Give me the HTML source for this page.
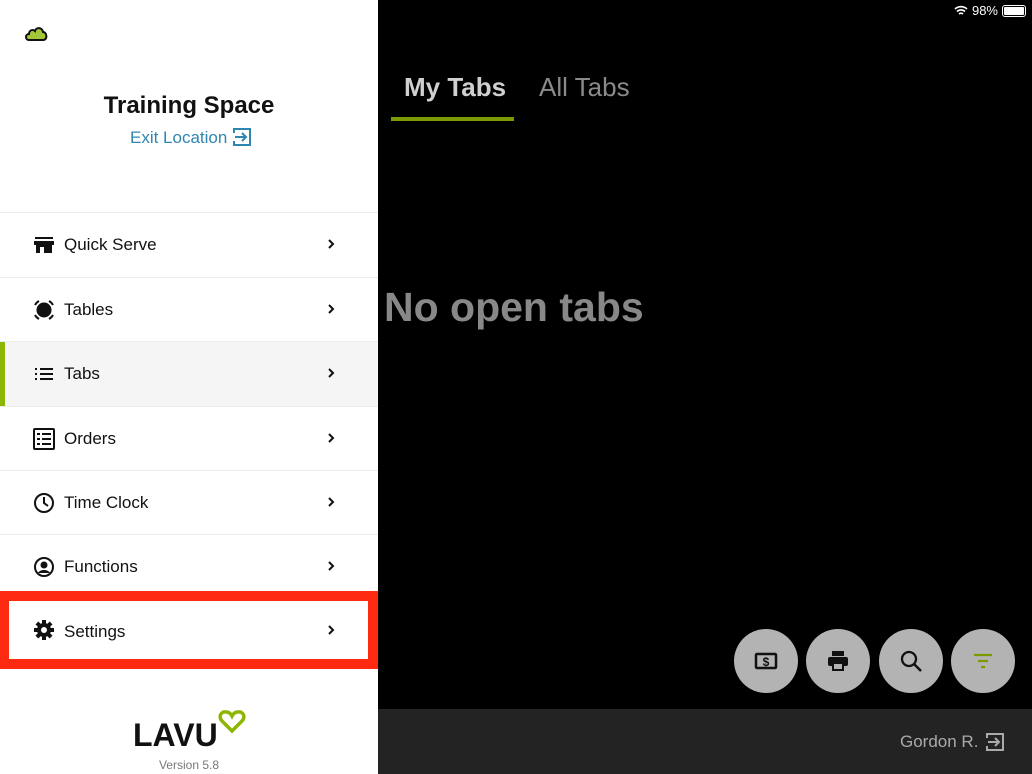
<!DOCTYPE html>
<html><head><meta charset="utf-8"><style>
*{margin:0;padding:0;box-sizing:border-box}
body{width:1032px;height:774px;overflow:hidden;font-family:"Liberation Sans","DejaVu Sans",sans-serif;background:#000;position:relative}
.left{position:absolute;left:0;top:0;width:378px;height:774px;background:#fff}
.row{position:absolute;left:0;width:378px;height:64px;border-top:1px solid #ececec}
.row .ic{position:absolute;left:33px;top:21px;width:22px;height:22px}
.row .lb{position:absolute;left:64px;top:22px;font-size:17px;color:#111;font-weight:500}
.row .ch{position:absolute;left:326px;top:24px;width:10px;height:14px}
.circ{position:absolute;top:629px;width:64px;height:64px;border-radius:50%;background:#b3b3b3}
.circ svg{position:absolute;left:20px;top:20px}
</style></head><body>
<div class="left">
<svg style="position:absolute;left:24px;top:24px" width="25" height="18" viewBox="0 0 25 18"><path d="M5 16 C1 16 1 10 5 10 C5 6 9 5 11 7 C12 3 18 3 19 8 C23 8 24 16 19 16 Z" fill="#a4c639" stroke="#111" stroke-width="2"/></svg>
<div style="position:absolute;left:0;width:378px;top:92px;text-align:center;font-size:24px;font-weight:bold;color:#111">Training Space</div>
<div style="position:absolute;left:130px;top:128px;font-size:17px;color:#2f86b0">Exit Location</div>
<svg style="position:absolute;left:232px;top:127px" width="20" height="20" viewBox="0 0 20 20"><path d="M2 6V2H18V18H2V14" fill="none" stroke="#2f86b0" stroke-width="2"/><path d="M3 10H14M10 6L14 10L10 14" fill="none" stroke="#2f86b0" stroke-width="2"/></svg>

<div class="row" style="top:212px"><svg class="ic" viewBox="0 0 22 22"><rect x="2" y="3" width="18" height="2" fill="#111"/><path d="M1 7H21V11H19V19H11V13H7V19H3V11H1Z" fill="#111"/></svg><div class="lb">Quick Serve</div><svg class="ch" viewBox="0 0 10 14"><path d="M3 3L7 7L3 11" fill="none" stroke="#111" stroke-width="2"/></svg></div>
<div class="row" style="top:277px"><svg class="ic" viewBox="0 0 22 22"><circle cx="11" cy="11" r="7.5" fill="#111"/><path d="M2 6A10 10 0 0 1 6 2M16 2A10 10 0 0 1 20 6M20 16A10 10 0 0 1 16 20M6 20A10 10 0 0 1 2 16" stroke="#111" stroke-width="2" fill="none"/></svg><div class="lb">Tables</div><svg class="ch" viewBox="0 0 10 14"><path d="M3 3L7 7L3 11" fill="none" stroke="#111" stroke-width="2"/></svg></div>
<div class="row" style="top:341px;height:65px;background:#f5f5f5"><div style="position:absolute;left:0;top:0;width:5px;height:65px;background:#8db600"></div><svg class="ic" viewBox="0 0 22 22"><path d="M2 6H4M7 6H20M2 11H4M7 11H20M2 16H4M7 16H20" stroke="#111" stroke-width="2"/></svg><div class="lb">Tabs</div><svg class="ch" viewBox="0 0 10 14"><path d="M3 3L7 7L3 11" fill="none" stroke="#111" stroke-width="2"/></svg></div>
<div class="row" style="top:406px"><svg class="ic" viewBox="0 0 22 22"><rect x="1" y="1" width="20" height="20" rx="1" fill="none" stroke="#111" stroke-width="2"/><path d="M4 6H7M9 6H18M4 11H7M9 11H18M4 16H7M9 16H18" stroke="#111" stroke-width="2"/></svg><div class="lb">Orders</div><svg class="ch" viewBox="0 0 10 14"><path d="M3 3L7 7L3 11" fill="none" stroke="#111" stroke-width="2"/></svg></div>
<div class="row" style="top:470px"><svg class="ic" viewBox="0 0 22 22"><circle cx="11" cy="11" r="9" fill="none" stroke="#111" stroke-width="2"/><path d="M11 5V11L15 14" fill="none" stroke="#111" stroke-width="2"/></svg><div class="lb">Time Clock</div><svg class="ch" viewBox="0 0 10 14"><path d="M3 3L7 7L3 11" fill="none" stroke="#111" stroke-width="2"/></svg></div>
<div class="row" style="top:534px"><svg class="ic" viewBox="0 0 22 22"><circle cx="11" cy="11" r="9" fill="none" stroke="#111" stroke-width="2"/><circle cx="11" cy="9" r="3.5" fill="#111"/><path d="M5 17C7 13 15 13 17 17" fill="#111"/></svg><div class="lb">Functions</div><svg class="ch" viewBox="0 0 10 14"><path d="M3 3L7 7L3 11" fill="none" stroke="#111" stroke-width="2"/></svg></div>
<div style="position:absolute;left:0;top:591px;width:378px;height:78px;background:#ff2a12"></div>
<div class="row" style="top:601px;left:9px;width:359px;height:58px;border:none;background:#fff"><svg class="ic" style="left:24px;top:18px" viewBox="0 0 22 22"><g fill="#111"><circle cx="11" cy="11" r="7"/><rect x="9" y="1" width="4" height="20"/><rect x="1" y="9" width="20" height="4"/><rect x="9" y="1" width="4" height="20" transform="rotate(45 11 11)"/><rect x="9" y="1" width="4" height="20" transform="rotate(-45 11 11)"/></g><circle cx="11" cy="11" r="3" fill="#fff"/></svg><div class="lb" style="left:55px;top:21px">Settings</div><svg class="ch" style="left:317px;top:22px" viewBox="0 0 10 14"><path d="M3 3L7 7L3 11" fill="none" stroke="#111" stroke-width="2"/></svg></div>

<div style="position:absolute;left:133px;top:718px;font-size:32px;font-weight:900;letter-spacing:0px;color:#111;line-height:34px">LAVU</div>
<svg style="position:absolute;left:218px;top:709px" width="28" height="26" viewBox="0 0 28 26"><path d="M14 22L4 12C0 8 3 2 8 3C11 3 13 5 14 7C15 5 17 3 20 3C25 2 28 8 24 12Z" fill="none" stroke="#8db600" stroke-width="3.5"/></svg>
<div style="position:absolute;left:0;width:378px;top:758px;text-align:center;font-size:12px;color:#777">Version 5.8</div>
</div>

<div style="position:absolute;right:6px;top:3px;color:#fff;font-size:13px;display:flex;align-items:center;gap:4px">
<svg width="14" height="11" viewBox="0 0 14 11"><path d="M1 4A9 9 0 0 1 13 4M3 6.5A6 6 0 0 1 11 6.5M5 9A3 3 0 0 1 9 9" stroke="#fff" stroke-width="1.6" fill="none"/></svg>98%<span style="display:inline-block;width:24px;height:12px;border:1px solid #fff;border-radius:3px;padding:1px"><span style="display:block;width:100%;height:100%;background:#fff;border-radius:1px"></span></span></div>

<div style="position:absolute;left:404px;top:72px;font-size:26px;font-weight:bold;color:#d0d0d0">My Tabs</div>
<div style="position:absolute;left:539px;top:72px;font-size:26px;color:#8a8a8a">All Tabs</div>
<div style="position:absolute;left:391px;top:117px;width:123px;height:4px;background:#7a9a00"></div>
<div style="position:absolute;left:384px;top:284px;font-size:41px;font-weight:bold;color:#888">No open tabs</div>

<div class="circ" style="left:734px"><svg width="24" height="24" viewBox="0 0 24 24"><rect x="2" y="5" width="20" height="14" rx="1" fill="none" stroke="#111" stroke-width="2.5"/><text x="12" y="17" font-size="12" font-weight="bold" text-anchor="middle" fill="#111" font-family="Liberation Sans">$</text></svg></div>
<div class="circ" style="left:806px"><svg width="24" height="24" viewBox="0 0 24 24"><rect x="6" y="2" width="12" height="5" fill="#111"/><rect x="2" y="8" width="20" height="9" rx="2" fill="#111"/><rect x="6" y="14" width="12" height="8" fill="#111"/><rect x="8" y="15" width="8" height="5" fill="#b3b3b3"/></svg></div>
<div class="circ" style="left:879px"><svg width="24" height="24" viewBox="0 0 24 24"><circle cx="10" cy="10" r="7" fill="none" stroke="#111" stroke-width="2.3"/><path d="M15 15L22 22" stroke="#111" stroke-width="2.5"/></svg></div>
<div class="circ" style="left:951px"><svg width="24" height="24" viewBox="0 0 24 24"><path d="M3 6H21M7 12H17M10 18H14" stroke="#7a9a00" stroke-width="2.2"/></svg></div>

<div style="position:absolute;left:378px;top:709px;width:654px;height:65px;background:#232323"></div>
<div style="position:absolute;left:900px;top:732px;font-size:17px;color:#aaa">Gordon R.</div>
<svg style="position:absolute;left:985px;top:732px" width="20" height="20" viewBox="0 0 20 20"><path d="M2 6V2H18V18H2V14" fill="none" stroke="#aaa" stroke-width="2"/><path d="M3 10H14M10 6L14 10L10 14" fill="none" stroke="#aaa" stroke-width="2"/></svg>
</body></html>
